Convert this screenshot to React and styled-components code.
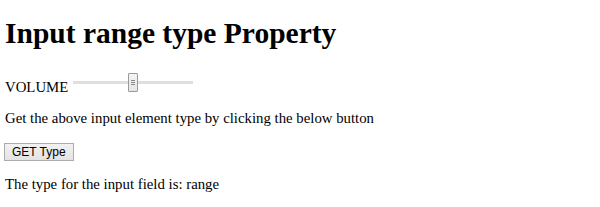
import React from "react";
import styled, { createGlobalStyle } from "styled-components";

const Global = createGlobalStyle`
  html, body { margin: 0; padding: 0; background: #fff; }
  body {
    font-family: "Liberation Serif", "Times New Roman", serif;
    font-size: 14.8px;
    color: #000;
  }
`;

const Page = styled.div`
  padding: 0 5px;
  display: flex;
  flex-direction: column;
  align-items: flex-start;
`;

const Title = styled.h1`
  margin: 18px 0 0;
  font-size: 29.5px;
  line-height: 30px;
  font-weight: bold;
`;

const Row = styled.div`
  margin-top: 25px;
  display: flex;
  align-items: flex-end;
`;

const Label = styled.span`
  line-height: 17px;
`;

const Slider = styled.input`
  -webkit-appearance: none;
  appearance: none;
  width: 120px;
  height: 19px;
  margin: 0 0 4px 5px;
  padding: 0;
  background: transparent;
  outline: none;

  &::-webkit-slider-runnable-track {
    height: 3px;
    background: #e0dfdd;
    border-radius: 0;
  }
  &::-webkit-slider-thumb {
    -webkit-appearance: none;
    width: 10px;
    height: 19px;
    margin-top: -8px;
    box-sizing: border-box;
    border: 1px solid #9a9a9a;
    border-radius: 1px;
    background:
      linear-gradient(#8a8a8a, #8a8a8a) center 6px / 4px 1px no-repeat,
      linear-gradient(#8a8a8a, #8a8a8a) center 8px / 4px 1px no-repeat,
      linear-gradient(#8a8a8a, #8a8a8a) center 10px / 4px 1px no-repeat,
      linear-gradient(#f4f4f4, #e6e6e6);
  }
`;

const Text = styled.p`
  margin: ${(p) => p.$top}px 0 0;
  line-height: 17px;
`;

const Button = styled.button`
  margin-top: 15.6px;
  margin-left: -1px;
  height: 18px;
  padding: 0 7px;
  font-family: "Liberation Sans", Arial, sans-serif;
  font-size: 12px;
  line-height: 16px;
  color: #000;
  border: 1px solid #acacac;
  border-radius: 0;
  background: linear-gradient(#f2f2f2, #e3e3e3);
`;

export default function App() {
  return (
    <>
      <Global />
      <Page>
        <Title>Input range type Property</Title>
        <Row>
          <Label>VOLUME</Label>
          <Slider type="range" defaultValue={50} />
        </Row>
        <Text $top={14}>Get the above input element type by clicking the below button</Text>
        <Button>GET Type</Button>
        <Text $top={15.4}>The type for the input field is: range</Text>
      </Page>
    </>
  );
}
